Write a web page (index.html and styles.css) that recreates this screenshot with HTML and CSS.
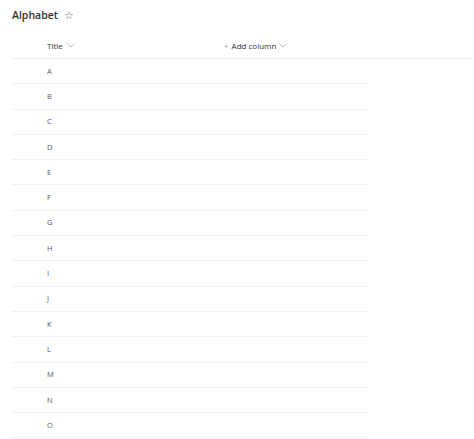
FILE: index.html
```html
<!DOCTYPE html>
<html>
<head>
<meta charset="utf-8">
<link rel="stylesheet" href="styles.css">
</head>
<body>
<div class="page">
  <div class="title-bar">
    <span class="list-name">Alphabet</span>
    <span class="star">☆</span>
  </div>
  <div class="list">
    <div class="header">
      <div class="col-title">Title <svg class="chev" viewBox="0 0 10 6" width="8" height="5"><path d="M0.5 0.5 L5 5 L9.5 0.5" fill="none" stroke="#a0a0a0" stroke-width="0.9"/></svg></div>
      <div class="col-add"><span class="plus">+</span> Add column <svg class="chev" viewBox="0 0 10 6" width="8" height="5"><path d="M0.5 0.5 L5 5 L9.5 0.5" fill="none" stroke="#a0a0a0" stroke-width="0.9"/></svg></div>
    </div>
    <div class="rows">
      <div class="row">A</div>
      <div class="row">B</div>
      <div class="row">C</div>
      <div class="row">D</div>
      <div class="row">E</div>
      <div class="row">F</div>
      <div class="row">G</div>
      <div class="row">H</div>
      <div class="row">I</div>
      <div class="row">J</div>
      <div class="row">K</div>
      <div class="row">L</div>
      <div class="row">M</div>
      <div class="row">N</div>
      <div class="row">O</div>
    </div>
  </div>
</div>
</body>
</html>
```

FILE: styles.css
```css
html, body {
  margin: 0;
  padding: 0;
  background: #ffffff;
  overflow: hidden;
}
body {
  font-family: "Open Sans", "Noto Sans", "Liberation Sans", sans-serif;
  color: #323130;
}
.page {
  width: 474px;
  height: 439px;
}
.title-bar {
  display: flex;
  align-items: center;
  height: 30px;
  padding-left: 12px;
  gap: 6px;
}
.list-name {
  font-size: 10.5px;
  font-weight: 600;
  color: #323130;
}
.star {
  font-size: 10.5px;
  color: #7a7a7a;
}
.list {
  padding-left: 12px;
  margin-top: 3px;
}
.header {
  display: flex;
  align-items: center;
  height: 25px;
  width: 460px;
  border-bottom: 1px solid #ededed;
  font-size: 8px;
  color: #323130;
}
.col-title {
  width: 177px;
  padding-left: 35px;
  display: flex;
  align-items: center;
  gap: 4px;
}
.col-add {
  display: flex;
  align-items: center;
  gap: 3px;
}
.plus {
  color: #a0a0a0;
  font-size: 8px;
}
.chev {
  display: block;
}
.rows {
  width: 356px;
}
.row {
  height: 24.3px;
  border-bottom: 1px solid #f1f1f1;
  display: flex;
  align-items: center;
  padding-left: 35px;
  padding-bottom: 1px;
  box-sizing: border-box;
  height: 25.3px;
  font-size: 7.5px;
  color: #5a5a5a;
}
```
